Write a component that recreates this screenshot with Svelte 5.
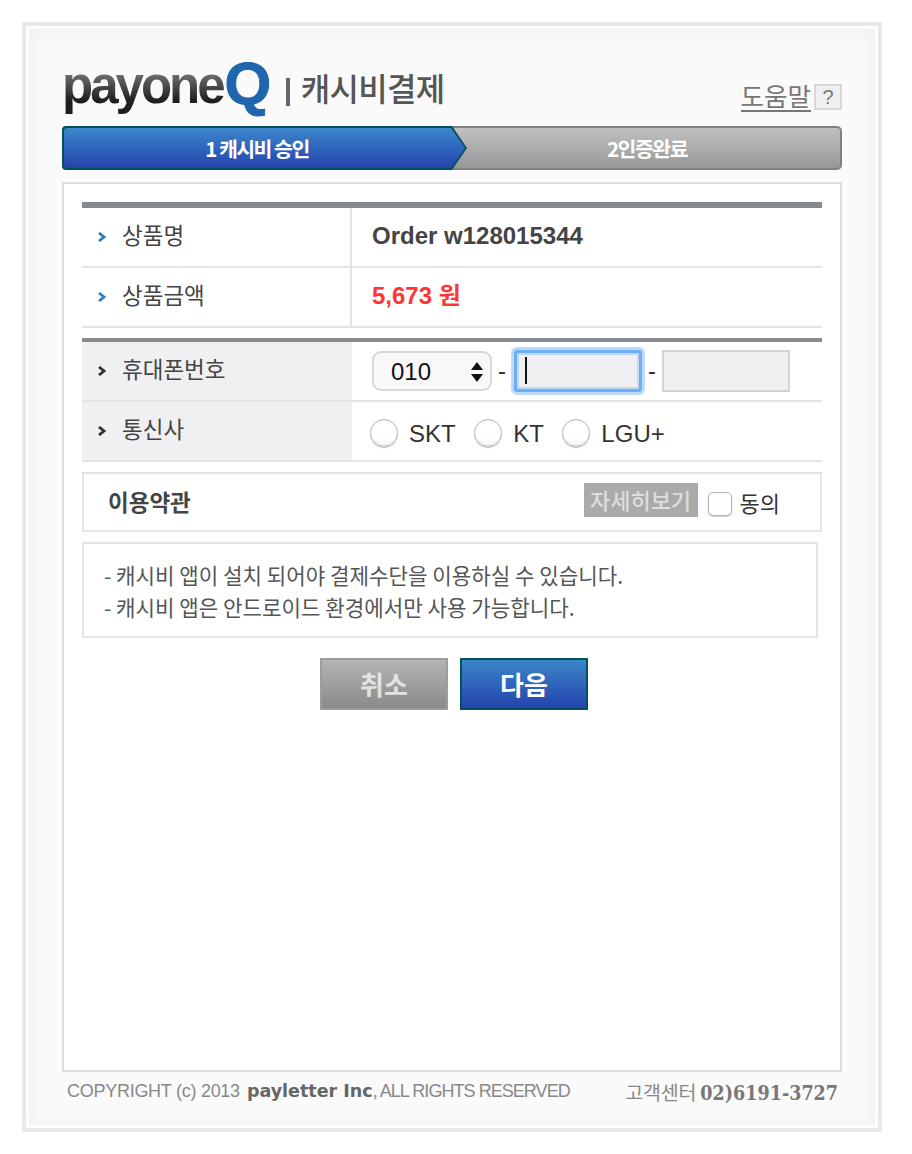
<script lang="ts">
  const carriers = [
    { id: 'skt', label: 'SKT' },
    { id: 'kt', label: 'KT' },
    { id: 'lgu', label: 'LGU+' }
  ];

  let carrier = $state('');
  let agreed = $state(false);
</script>

<div class="frame">
  <div class="inner">
    <header class="top">
      <div class="logo">
        <span class="logo-word">payone</span><span class="logo-q">Q</span>
        <span class="logo-bar"></span>
        <span class="logo-sub">캐시비결제</span>
      </div>
      <div class="help">
        <span class="help-text">도움말</span>
        <span class="help-mark">?</span>
      </div>
    </header>

    <div class="steps">
      <div class="step active"><span>1 캐시비 승인</span></div>
      <div class="step next"><span>2인증완료</span></div>
    </div>

    <main class="card">
      <section class="group first">
        <div class="row">
          <div class="label">
            <svg class="chev blue" viewBox="0 0 8 10"><path d="M1 1l5 4-5 4" /></svg>
            상품명
          </div>
          <div class="value order">Order w128015344</div>
        </div>
        <div class="row">
          <div class="label">
            <svg class="chev blue" viewBox="0 0 8 10"><path d="M1 1l5 4-5 4" /></svg>
            상품금액
          </div>
          <div class="value price">5,673 원</div>
        </div>
      </section>

      <section class="group second">
        <div class="row">
          <div class="label shaded">
            <svg class="chev" viewBox="0 0 8 10"><path d="M1 1l5 4-5 4" /></svg>
            휴대폰번호
          </div>
          <div class="value phone">
            <div class="select-wrap">
              <select aria-label="통신 앞자리">
                <option>010</option>
                <option>011</option>
                <option>016</option>
              </select>
              <svg class="updown" viewBox="0 0 12 20"><path d="M6 0l6 8H0zM6 20l6-8H0z" /></svg>
            </div>
            <span class="dash">-</span>
            <div class="input-wrap">
              <input class="tel focused" type="text" aria-label="가운데 번호" />
              <span class="caret"></span>
            </div>
            <span class="dash">-</span>
            <input class="tel" type="text" aria-label="끝 번호" />
          </div>
        </div>
        <div class="row">
          <div class="label shaded">
            <svg class="chev" viewBox="0 0 8 10"><path d="M1 1l5 4-5 4" /></svg>
            통신사
          </div>
          <div class="value radios">
            {#each carriers as c}
              <label class="radio">
                <input type="radio" name="carrier" value={c.id} bind:group={carrier} />
                <span>{c.label}</span>
              </label>
            {/each}
          </div>
        </div>
      </section>

      <section class="terms">
        <strong>이용약관</strong>
        <button type="button" class="detail">자세히보기</button>
        <label class="agree">
          <input type="checkbox" bind:checked={agreed} />
          <span>동의</span>
        </label>
      </section>

      <section class="notice">
        <p>- 캐시비 앱이 설치 되어야 결제수단을 이용하실 수 있습니다.</p>
        <p>- 캐시비 앱은 안드로이드 환경에서만 사용 가능합니다.</p>
      </section>

      <div class="actions">
        <button type="button" class="btn cancel">취소</button>
        <button type="button" class="btn go">다음</button>
      </div>
    </main>

    <footer class="foot">
      <div class="copy"><span class="c1">COPYRIGHT (c) 2013</span> <b>payletter Inc</b><span class="c2">, ALL RIGHTS RESERVED</span></div>
      <div class="center">고객센터 <b>02)6191-3727</b></div>
    </footer>
  </div>
</div>

<style>
  :global(body) {
    margin: 0;
    background: #fff;
  }

  .frame {
    box-sizing: border-box;
    width: 860px;
    height: 1110px;
    margin: 22px 0 0 22px;
    border: 4px solid #e8e8e8;
    font-family: "Noto Sans CJK KR", "Liberation Sans", sans-serif;
  }

  .inner {
    box-sizing: border-box;
    height: 100%;
    padding: 0 33px;
    border: 3px solid #fff;
    background: #fafafa;
    box-shadow: inset 0 0 16px #ececec;
  }

  .top {
    display: flex;
    justify-content: space-between;
    align-items: flex-end;
    height: 97px;
  }

  .logo {
    display: flex;
    align-items: flex-start;
    flex: 1;
    height: 66px;
    margin-bottom: 6px;
    font-family: "Liberation Sans", sans-serif;
    font-weight: 700;
  }

  .logo-word {
    margin-top: 2px;
    padding: 0 2px 0 0;
    font-size: 51px;
    line-height: 60px;
    letter-spacing: -3px;
    color: transparent;
    background: linear-gradient(#777 25%, #1e1e1e 75%);
    -webkit-background-clip: text;
    background-clip: text;
  }

  .logo-q {
    margin-top: -2px;
    font-size: 60px;
    line-height: 64px;
    letter-spacing: -0.5px;
    color: #1f66ad;
    -webkit-text-stroke: 1px #1f66ad;
  }

  .logo-bar {
    width: 4px;
    height: 28px;
    margin: 24px 11px 0 15px;
    background: #666;
  }

  .logo-sub {
    margin-top: 10px;
    font-family: "Noto Sans CJK KR", sans-serif;
    font-size: 32px;
    line-height: 46px;
    font-weight: 500;
    letter-spacing: -0.7px;
    color: #555;
  }

  .help {
    display: flex;
    align-items: flex-end;
    gap: 3px;
    margin-bottom: 14px;
    color: #777;
  }

  .help-text {
    font-size: 25.5px;
    line-height: 30px;
    border-bottom: 2px solid #777;
  }

  .help-mark {
    box-sizing: border-box;
    width: 28px;
    height: 26px;
    margin-bottom: 2px;
    border: 2px solid #d8d8d8;
    background: #f0f0f0;
    font: 20px/22px "Liberation Sans", sans-serif;
    text-align: center;
  }

  .steps {
    display: flex;
    height: 44px;
    font-size: 20.5px;
    font-weight: 700;
    letter-spacing: -1.5px;
    color: #fff;
  }

  .step {
    display: flex;
    align-items: center;
    justify-content: center;
    box-sizing: border-box;
  }

  .step span {
    position: relative;
  }

  .step.active {
    position: relative;
    z-index: 1;
    width: 405px;
    padding-right: 15px;
    background: #03505f;
    clip-path: polygon(0 0, 390px 0, 100% 50%, 390px 100%, 0 100%);
    border-radius: 4px 0 0 4px;
  }

  .step.active::before {
    content: "";
    position: absolute;
    inset: 2px;
    background: linear-gradient(#3b87cb, #2443ab);
    clip-path: polygon(0 0, 387px 0, 100% 50%, 387px 100%, 0 100%);
    border-radius: 3px 0 0 3px;
  }

  .step.next {
    flex: 1;
    margin-left: -15px;
    border: 2px solid #808080;
    border-radius: 0 5px 5px 0;
    background: linear-gradient(#c0c0c0, #989898);
  }

  .card {
    box-sizing: border-box;
    height: 890px;
    margin-top: 12px;
    padding: 18px;
    border: 2px solid #ddd;
    background: #fff;
  }

  .group {
    border-top: 6px solid #888b8e;
  }

  .group.second {
    margin-top: 10px;
    border-top-width: 4px;
  }

  .row {
    display: flex;
    height: 58px;
    border-bottom: 2px solid #e4e4e4;
  }

  .label {
    display: flex;
    align-items: center;
    box-sizing: border-box;
    width: 270px;
    padding: 0 0 6px 16px;
    border-right: 2px solid #e4e4e4;
    font-size: 22.5px;
    color: #444;
  }

  .label.shaded {
    border-right: 0;
    background: #f0f0f2;
  }

  .chev {
    flex: none;
    width: 8px;
    height: 10px;
    margin: 6px 16px 0 0;
    fill: none;
    stroke: #333;
    stroke-width: 2.8;
  }

  .chev.blue {
    stroke: #2f7fc6;
  }

  .value {
    display: flex;
    align-items: center;
    padding-left: 20px;
    font-family: "Liberation Sans", "Noto Sans CJK KR", sans-serif;
    font-size: 24px;
    color: #333;
  }

  .order {
    padding-bottom: 2px;
    font-weight: 700;
    color: #444;
  }

  .price {
    padding-bottom: 8px;
    font-weight: 700;
    color: #ff3535;
  }

  .select-wrap {
    position: relative;
    width: 120px;
    height: 40px;
  }

  select {
    appearance: none;
    box-sizing: border-box;
    width: 100%;
    height: 100%;
    padding: 0 0 0 17px;
    border: 2px solid #d8d8d8;
    border-radius: 9px;
    background: #f8f8f8;
    font: 24px "Liberation Sans", sans-serif;
    color: #111;
  }

  .updown {
    position: absolute;
    right: 9px;
    top: 10px;
    width: 12px;
    height: 22px;
    fill: #111;
    pointer-events: none;
  }

  .dash {
    margin: 0 6px;
    color: #333;
  }

  .input-wrap {
    position: relative;
    display: flex;
    margin-left: 2px;
  }

  .tel {
    box-sizing: border-box;
    width: 128px;
    height: 42px;
    padding: 0;
    border: 2px solid #d3d3d3;
    background: #f0f0f2;
    outline: none;
  }

  .tel.focused {
    border: 3px solid #6eaef5;
    border-radius: 3px;
    box-shadow: inset 0 0 0 2px #bcd9f8, 0 0 1px 3px #bcd9f8;
  }

  .caret {
    position: absolute;
    left: 11px;
    top: 7px;
    width: 2px;
    height: 27px;
    background: #111;
  }

  .radios {
    gap: 18.5px;
    padding-left: 18px;
    padding-top: 4px;
  }

  .radio {
    display: flex;
    align-items: center;
    gap: 11px;
  }

  .radio span {
    padding-top: 2px;
  }

  .radio input {
    appearance: none;
    flex: none;
    width: 28px;
    height: 28px;
    margin: 0;
    border: 1px solid #b4b4b4;
    border-radius: 50%;
    background: linear-gradient(#fff 70%, #f0f0f0);
    box-shadow: 0 1px 1px #ccc;
  }

  .terms {
    display: flex;
    align-items: center;
    box-sizing: border-box;
    height: 60px;
    margin-top: 10px;
    padding: 0 40px 0 24px;
    border: 2px solid #e4e4e4;
    color: #444;
  }

  .terms strong {
    flex: 1;
    margin-top: -2px;
    font-size: 22.5px;
    font-weight: 700;
  }

  .detail {
    width: 114px;
    height: 34px;
    margin-top: -4px;
    padding: 0 0 4px;
    border: 0;
    background: #aaa;
    font: 500 22px "Noto Sans CJK KR", sans-serif;
    color: #ddd;
  }

  .agree {
    display: flex;
    align-items: center;
    gap: 8px;
    margin-left: 10px;
    font-size: 22px;
    color: #333;
  }

  .agree input {
    appearance: none;
    width: 24px;
    height: 24px;
    margin: 4px 0 0;
    border: 1px solid #b4b4b4;
    border-radius: 5px;
    background: #fff;
    box-shadow: 0 1px 1px #ccc;
  }

  .notice {
    box-sizing: border-box;
    width: 736px;
    height: 96px;
    margin-top: 10px;
    padding: 15px 20px;
    border: 2px solid #e4e4e4;
    font-size: 21.2px;
    line-height: 32px;
    color: #555;
  }

  .notice p {
    margin: 0;
    white-space: nowrap;
  }

  .actions {
    display: flex;
    justify-content: center;
    gap: 12px;
    margin: 20px 0 0 4px;
  }

  .btn {
    box-sizing: border-box;
    width: 128px;
    height: 52px;
    padding: 0 0 2px;
    font: 700 26px "Noto Sans CJK KR", sans-serif;
  }

  .cancel {
    border: 2px solid #9c9c9c;
    background: linear-gradient(#b4b4b4, #8a8a8a);
    color: #e2e2e2;
  }

  .go {
    border: 2px solid #03505f;
    background: linear-gradient(#3b87cb, #2443ab);
    color: #fff;
  }

  .foot {
    display: flex;
    justify-content: space-between;
    align-items: center;
    height: 38px;
    padding: 0 4px 0 5px;
    color: #888;
  }

  .copy {
    font: 18px "Liberation Sans", sans-serif;
  }

  .c1 {
    letter-spacing: -0.27px;
  }

  .c2 {
    letter-spacing: -0.95px;
  }

  .copy b {
    margin-left: 2px;
    font-family: "DejaVu Sans", sans-serif;
    font-size: 17.5px;
    color: #666;
  }

  .center {
    font-size: 19.5px;
    letter-spacing: -0.2px;
  }

  .center b {
    font-family: "DejaVu Serif", serif;
    font-stretch: condensed;
    font-size: 19.5px;
    color: #777;
    letter-spacing: 0;
  }
</style>
